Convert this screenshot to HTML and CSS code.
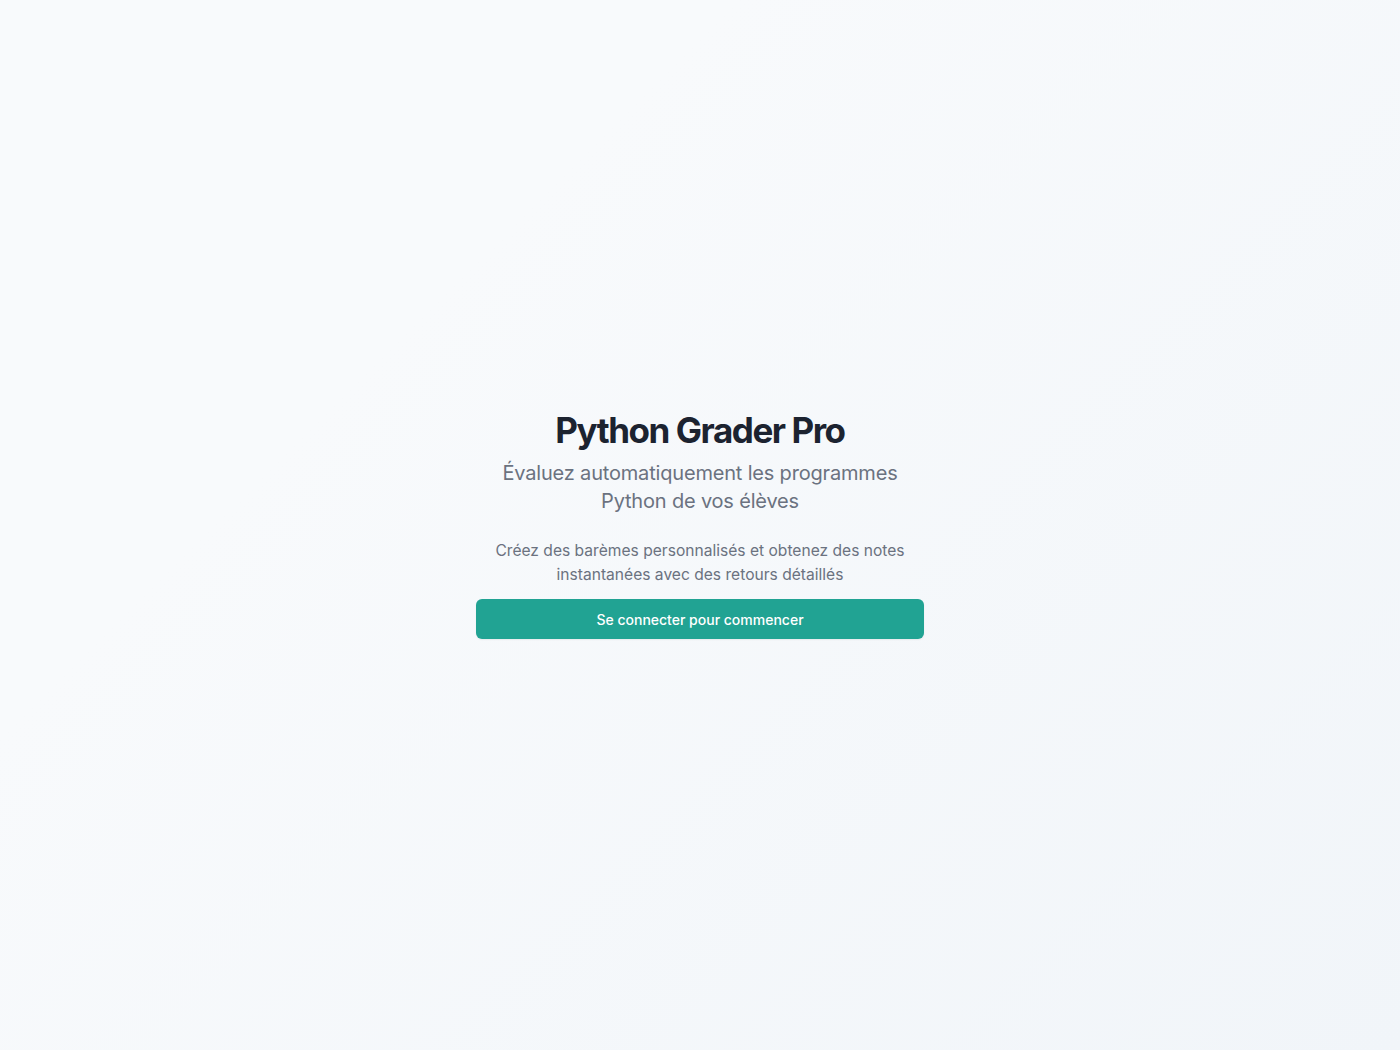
FILE: index.html
```html
<!DOCTYPE html>
<html lang="fr">
<head>
<meta charset="utf-8">
<title>Python Grader Pro</title>
<link rel="stylesheet" href="styles.css">
</head>
<body>
<main class="page">
  <section class="hero">
    <h1 class="title">Python Grader Pro</h1>
    <p class="subtitle">Évaluez automatiquement les programmes Python de vos élèves</p>
    <p class="desc">Créez des barèmes personnalisés et obtenez des notes instantanées avec des retours détaillés</p>
    <button class="cta" type="button">Se connecter pour commencer</button>
  </section>
</main>
</body>
</html>
```

FILE: styles.css
```css
* { box-sizing: border-box; }
html, body { margin: 0; padding: 0; height: 100%; }
body {
  font-family: "Inter", "Open Sans", sans-serif;
  background: linear-gradient(135deg, #f8fafc 0%, #f8fafc 30%, #f1f5f9 100%);
  color: #1e2532;
}
.page {
  min-height: 100vh;
  display: flex;
  align-items: center;
  justify-content: center;
  padding: 0 16px;
}
.hero {
  width: 448px;
  display: flex;
  flex-direction: column;
  align-items: center;
  text-align: center;
  margin-top: -1px;
}
.title {
  margin: 0;
  font-size: 35px;
  line-height: 40px;
  font-weight: 700;
  letter-spacing: -1.45px;
  color: #1c2330;
}
.subtitle {
  margin: 9px 0 0;
  width: 420px;
  font-size: 20px;
  line-height: 28px;
  color: #6b7280;
  letter-spacing: -0.18px;
}
.desc {
  margin: 24px 0 0;
  width: 430px;
  font-size: 15.6px;
  line-height: 24px;
  color: #6b7280;
  letter-spacing: 0;
}
.cta {
  margin-top: 12px;
  width: 100%;
  height: 40px;
  border: none;
  border-radius: 6px;
  background: #21a393;
  color: #ffffff;
  font-family: inherit;
  font-size: 14px;
  font-weight: 500;
  cursor: pointer;
  box-shadow: 0 1px 2px rgba(0,0,0,0.06);
}
```
